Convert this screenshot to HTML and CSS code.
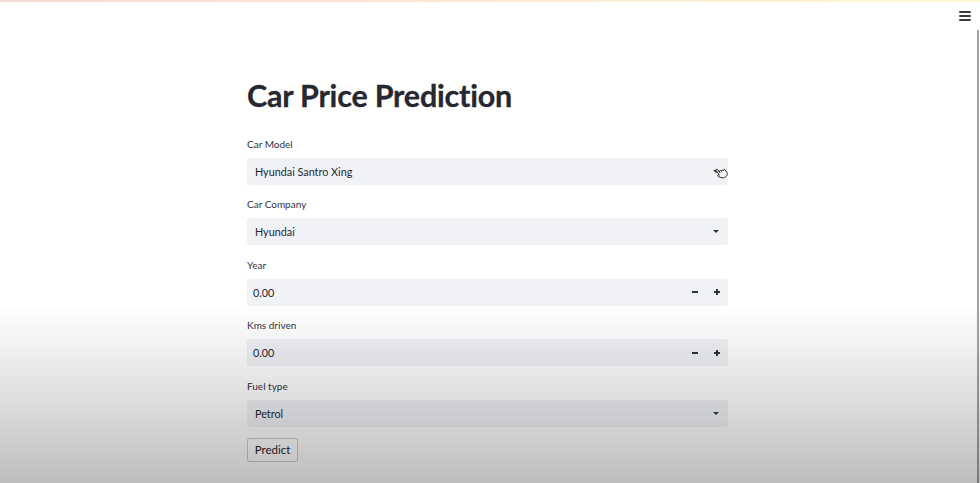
FILE: index.html
```html
<!DOCTYPE html>
<html lang="en">
<head>
<meta charset="utf-8">
<title>Car Price Prediction</title>
<link rel="stylesheet" href="styles.css">
</head>
<body>
<div class="decoration"></div>
<button class="menu" aria-label="menu"><span></span><span></span><span></span></button>
<main class="main">
  <h1 class="title">Car Price Prediction</h1>
  <div class="form">
    <div class="widget">
      <label class="label">Car Model</label>
      <div class="field select"><span class="value value-select">Hyundai Santro Xing</span><span class="caret"></span></div>
    </div>
    <div class="widget">
      <label class="label">Car Company</label>
      <div class="field select"><span class="value value-select">Hyundai</span><span class="caret"></span></div>
    </div>
    <div class="widget">
      <label class="label">Year</label>
      <div class="field number"><span class="value">0.00</span><span class="step minus"></span><span class="step plus"></span></div>
    </div>
    <div class="widget">
      <label class="label">Kms driven</label>
      <div class="field number"><span class="value">0.00</span><span class="step minus"></span><span class="step plus"></span></div>
    </div>
    <div class="widget">
      <label class="label">Fuel type</label>
      <div class="field select"><span class="value value-select">Petrol</span><span class="caret"></span></div>
    </div>
    <div class="actions"><button class="btn">Predict</button></div>
  </div>
</main>
<svg class="cursor" width="14" height="16" viewBox="0 0 16 16"><path d="M6 1.5c.6 0 1 .4 1 1V7h.5V6c0-.6.4-1 1-1s1 .4 1 1v1h.5c0-.6.4-1 1-1s1 .4 1 1v.5c0-.5.4-.9.9-.9s1 .4 1 1V11c0 2-1.5 3.5-3.5 3.5H8.5c-1.2 0-2-.5-2.7-1.4L3.2 9.6c-.4-.5-.3-1.1.2-1.4.4-.3 1-.2 1.3.2L5 9V2.5c0-.6.4-1 1-1z" fill="#fff" stroke="#222" stroke-width="1"/></svg>
<div class="scrollbar"></div>
<div class="shade"></div>
</body>
</html>
```
FILE: styles.css
```css
html, body {
  margin: 0;
  padding: 0;
  background: #ffffff;
  height: 483px;
  overflow: hidden;
  font-family: "Lato", "Open Sans", sans-serif;
  color: #31333f;
}
.decoration {
  height: 2px;
  background: linear-gradient(90deg, #fbd9d9, #fde9d2 50%, #fdfbd3);
}
.menu {
  position: absolute;
  top: 11px;
  left: 959px;
  width: 12px;
  height: 10px;
  padding: 0;
  border: 0;
  background: transparent;
  display: flex;
  flex-direction: column;
  justify-content: space-between;
}
.menu span {
  display: block;
  height: 2px;
  background: #3c3c3c;
  border-radius: 1px;
}
.main {
  width: 481px;
  margin-left: 247px;
  padding-top: 74px;
}
.title {
  margin: 0;
  font-size: 30.5px;
  font-weight: 700;
  line-height: 38px;
  color: #262730;
  letter-spacing: -0.2px;
  -webkit-text-stroke: 0.3px #262730;
}
.form {
  display: flex;
  flex-direction: column;
  gap: 12.5px;
  margin-top: 22.5px;
}
.widget {
  display: flex;
  flex-direction: column;
  gap: 7px;
}
.label {
  font-size: 10px;
  line-height: 14px;
  color: #31333f;
}
.field {
  height: 27px;
  background: #f0f2f6;
  border-radius: 3px;
  display: flex;
  align-items: center;
}
.value {
  flex: 1;
  font-size: 10.8px;
  padding-left: 6px;
  color: #262730;
}
.value-select {
  padding-left: 8px;
}
.caret {
  width: 0;
  height: 0;
  border-left: 3px solid transparent;
  border-right: 3px solid transparent;
  border-top: 3px solid #31333f;
  margin-right: 9px;
}
.step {
  position: relative;
  width: 22px;
  height: 27px;
}
.step::before, .plus::after {
  content: "";
  position: absolute;
  left: 8px;
  top: 12.5px;
  width: 6px;
  height: 2px;
  background: #31333f;
}
.plus::after {
  left: 10px;
  top: 10.5px;
  width: 2px;
  height: 6px;
}
.actions {
  margin-top: -1.5px;
}
.btn {
  font-family: inherit;
  font-size: 11.5px;
  color: #262730;
  background: #ffffff;
  border: 1px solid rgba(49, 51, 63, 0.25);
  border-radius: 3px;
  height: 24px;
  width: 51px;
  padding: 0;
}
.cursor {
  position: absolute;
  left: 714px;
  top: 165px;
  transform: rotate(-35deg);
}
.scrollbar {
  position: fixed;
  left: 977px;
  top: 30px;
  width: 2px;
  bottom: 0;
  background: #a4a4a4;
}
.shade {
  position: fixed;
  inset: 0;
  pointer-events: none;
  background: linear-gradient(180deg, rgba(0,0,0,0) 0, rgba(0,0,0,0) 305px, rgba(0,0,0,0.06) 350px, rgba(0,0,0,0.16) 420px, rgba(0,0,0,0.26) 483px);
}
```
